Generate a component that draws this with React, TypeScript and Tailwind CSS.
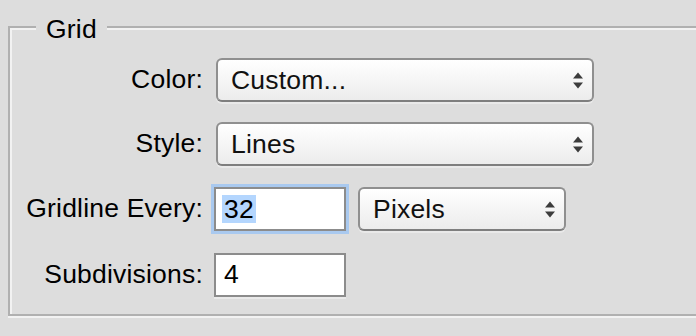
import React from "react";

function Arrows() {
  return (
    <svg width="10" height="17" viewBox="0 0 10 17" className="shrink-0">
      <polygon points="0,6.5 5,0.5 10,6.5" fill="#3c3c3c" />
      <polygon points="0,10.5 10,10.5 5,16.5" fill="#3c3c3c" />
    </svg>
  );
}

function Popup({ label, w }: { label: string; w: string }) {
  return (
    <div
      className={`${w} h-[44px] flex items-center justify-between pl-[13px] pr-[9px] border-2 border-[#8f8f8f] border-b-[#7e7e7e] rounded-[6px] bg-gradient-to-b from-[#ffffff] to-[#ececec] shadow-[0_2px_0_rgba(255,255,255,0.35)]`}
    >
      <span className="text-[#111] leading-none">{label}</span>
      <Arrows />
    </div>
  );
}

export default function App() {
  return (
    <div
      className="w-[696px] h-[336px] overflow-hidden bg-[#dddddd] pt-[26px] pl-[8px] text-[26.5px] tracking-[0.2px] text-black"
      style={{ fontFamily: '"Liberation Sans", Arial, sans-serif' }}
    >
      <div className="relative w-[688px] border-t-2 border-l-2 border-b-2 border-[#b0b0b0] shadow-[inset_2px_2px_0_#f2f2f2,0_2px_0_#f2f2f2] pt-[30px] pb-[17px]">
        <div className="absolute left-[26px] top-[-14px] h-[30px] px-[10px] bg-[#dddddd] leading-[30px]">
          Grid
        </div>

        <div className="grid grid-cols-[193px_1fr] gap-x-[11px] items-center">
          <div className="text-right">Color:</div>
          <div className="pl-[2px]">
            <Popup label="Custom..." w="w-[378px]" />
          </div>

          <div className="text-right mt-[20px]">Style:</div>
          <div className="pl-[2px] mt-[20px]">
            <Popup label="Lines" w="w-[378px]" />
          </div>

          <div className="text-right mt-[21px]">Gridline Every:</div>
          <div className="flex items-center mt-[21px]">
            <div className="w-[132px] h-[44px] bg-white border-2 border-[#8c8c8c] shadow-[0_0_0_3px_#a9c9ef] flex items-center pl-[6px]">
              <span className="bg-[#b4d6fe] h-[28px] leading-[28px] px-[2px] inline-block">32</span>
            </div>
            <div className="ml-[12px]">
              <Popup label="Pixels" w="w-[208px]" />
            </div>
          </div>

          <div className="text-right mt-[22px]">Subdivisions:</div>
          <div className="mt-[22px]">
            <div className="w-[132px] h-[44px] bg-white border-2 border-[#8c8c8c] shadow-[0_2px_0_rgba(255,255,255,0.4)] flex items-center pl-[8px]">
              4
            </div>
          </div>
        </div>
      </div>
    </div>
  );
}
